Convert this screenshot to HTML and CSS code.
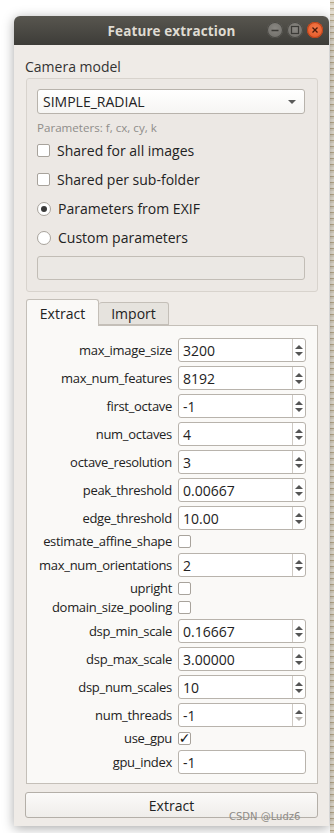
FILE: index.html
```html
<!DOCTYPE html>
<html>
<head>
<meta charset="utf-8">
<link rel="stylesheet" href="styles.css">
</head>
<body>
<div class="window">
  <div class="titlebar">
    <span class="title">Feature extraction</span>
    <div class="wbtns">
      <span class="wbtn min"><svg width="16" height="16" viewBox="0 0 16 16"><line x1="4.5" y1="8.5" x2="11.5" y2="8.5" stroke="#3c3b37" stroke-width="1.3"/></svg></span>
      <span class="wbtn max"><svg width="16" height="16" viewBox="0 0 16 16"><rect x="4.5" y="4.5" width="7" height="7" fill="none" stroke="#3c3b37" stroke-width="1.2"/></svg></span>
      <span class="wbtn close"><svg width="16" height="16" viewBox="0 0 16 16"><path d="M5.5 5.5 L10.5 10.5 M10.5 5.5 L5.5 10.5" stroke="#4a1a0a" stroke-width="1.3"/></svg></span>
    </div>
  </div>
  <div class="content">
    <div class="section-label">Camera model</div>
    <div class="group">
      <div class="combo"><span>SIMPLE_RADIAL</span><span class="combo-arrow"></span></div>
      <div class="hint">Parameters: f, cx, cy, k</div>
      <div class="opt"><span class="cb"></span><span>Shared for all images</span></div>
      <div class="opt"><span class="cb"></span><span>Shared per sub-folder</span></div>
      <div class="opt"><span class="rb checked"></span><span>Parameters from EXIF</span></div>
      <div class="opt"><span class="rb"></span><span>Custom parameters</span></div>
      <div class="lineedit disabled"></div>
    </div>
    <div class="tabs">
      <div class="tab active">Extract</div>
      <div class="tab">Import</div>
    </div>
    <div class="panel">
      <div class="form">
        <label>max_image_size</label><div class="spin"><span class="val">3200</span><span class="arrows"><i class="up"></i><i class="down"></i></span></div>
        <label>max_num_features</label><div class="spin"><span class="val">8192</span><span class="arrows"><i class="up"></i><i class="down"></i></span></div>
        <label>first_octave</label><div class="spin"><span class="val">-1</span><span class="arrows"><i class="up"></i><i class="down"></i></span></div>
        <label>num_octaves</label><div class="spin"><span class="val">4</span><span class="arrows"><i class="up"></i><i class="down"></i></span></div>
        <label>octave_resolution</label><div class="spin"><span class="val">3</span><span class="arrows"><i class="up"></i><i class="down"></i></span></div>
        <label>peak_threshold</label><div class="spin"><span class="val">0.00667</span><span class="arrows"><i class="up"></i><i class="down"></i></span></div>
        <label>edge_threshold</label><div class="spin"><span class="val">10.00</span><span class="arrows"><i class="up"></i><i class="down"></i></span></div>
        <label class="short">estimate_affine_shape</label><div class="cbcell"><span class="cb"></span></div>
        <label>max_num_orientations</label><div class="spin"><span class="val">2</span><span class="arrows"><i class="up"></i><i class="down"></i></span></div>
        <label class="short">upright</label><div class="cbcell"><span class="cb"></span></div>
        <label class="short">domain_size_pooling</label><div class="cbcell"><span class="cb"></span></div>
        <label>dsp_min_scale</label><div class="spin"><span class="val">0.16667</span><span class="arrows"><i class="up"></i><i class="down"></i></span></div>
        <label>dsp_max_scale</label><div class="spin"><span class="val">3.00000</span><span class="arrows"><i class="up"></i><i class="down"></i></span></div>
        <label>dsp_num_scales</label><div class="spin"><span class="val">10</span><span class="arrows"><i class="up"></i><i class="down"></i></span></div>
        <label>num_threads</label><div class="spin"><span class="val">-1</span><span class="arrows"><i class="up"></i><i class="down off"></i></span></div>
        <label class="short">use_gpu</label><div class="cbcell"><span class="cb on">&#10003;</span></div>
        <label>gpu_index</label><div class="lineedit"><span class="val">-1</span></div>
      </div>
    </div>
    <div class="button">Extract</div>
  </div>
</div>
<div class="watermark">CSDN @Ludz6</div>
</body>
</html>
```

FILE: styles.css
```css
html, body {
  margin: 0;
  padding: 0;
}
body {
  width: 334px;
  height: 833px;
  overflow: hidden;
  position: relative;
  font-family: "Open Sans", "DejaVu Sans", sans-serif;
  background:
    repeating-linear-gradient(0deg, #d9d2c2 0 2px, #b9ab8c 2px 3px, #e6e0d4 3px 6px) right top / 4px 100% no-repeat,
    #ffffff;
}
.window {
  margin: 16px 0 0 14px;
  width: 315px;
  border-radius: 6px 6px 0 0;
  box-shadow: 0 2px 12px rgba(0,0,0,0.35);
  overflow: hidden;
}
.titlebar {
  height: 29px;
  background: linear-gradient(#58564f, #3d3c38);
  display: flex;
  align-items: center;
  position: relative;
}
.title {
  flex: 1;
  text-align: center;
  color: #dfdbd2;
  font-weight: bold;
  font-size: 13.5px;
  letter-spacing: 0.1px;
}
.wbtns {
  position: absolute;
  right: 6px;
  top: 6px;
  display: flex;
  gap: 4px;
}
.wbtn {
  width: 16px;
  height: 16px;
  border-radius: 50%;
  display: block;
}
.wbtn svg { display: block; }
.wbtn.min, .wbtn.max {
  background: radial-gradient(circle at 50% 40%, #8a8883, #6a6863);
  box-shadow: inset 0 0 0 1px #4a4944;
}
.wbtn.close {
  background: radial-gradient(circle at 50% 40%, #f57a4a, #e0501f);
  box-shadow: inset 0 0 0 1px #b8431b;
}
.content {
  background: #efebe7;
  padding: 13px 11px 8px 11px;
  color: #3c3c3c;
  font-size: 14px;
}
.section-label {
  line-height: 18px;
  height: 18px;
  color: #333;
}
.group {
  margin-top: 2px;
  margin-left: 1px;
  border: 1px solid #d8d3cd;
  border-radius: 3px;
  padding: 10px 12px 11px 10px;
  background: #ece8e4;
}
.combo {
  height: 25px;
  box-sizing: border-box;
  border: 1px solid #b8b3ac;
  border-radius: 3px;
  background: linear-gradient(#ffffff, #f6f5f3);
  display: flex;
  align-items: center;
  justify-content: space-between;
  padding: 0 8px 0 5px;
  color: #222;
}
.combo-arrow {
  width: 0;
  height: 0;
  border-left: 4px solid transparent;
  border-right: 4px solid transparent;
  border-top: 4px solid #5a5a5a;
}
.hint {
  margin-top: 6px;
  font-size: 11.6px;
  line-height: 16px;
  color: #8f8d8a;
}
.opt {
  height: 29px;
  display: flex;
  align-items: center;
  gap: 7px;
  color: #222;
}
.opt:first-of-type { margin-top: 2px; }
.cb {
  width: 13px;
  height: 13px;
  box-sizing: border-box;
  border: 1px solid #a8a39c;
  border-radius: 2px;
  background: #fff;
  display: inline-flex;
  align-items: center;
  justify-content: center;
  flex: none;
}
.cb.on {
  font-size: 14px;
  line-height: 13px;
  color: #111;
  font-weight: bold;
  font-family: "DejaVu Sans", sans-serif;
}
.rb {
  width: 14px;
  height: 14px;
  box-sizing: border-box;
  border: 1px solid #a8a39c;
  border-radius: 50%;
  background: #fff;
  display: inline-flex;
  align-items: center;
  justify-content: center;
  flex: none;
}
.rb.checked::after {
  content: "";
  width: 6px;
  height: 6px;
  border-radius: 50%;
  background: #3a3a3a;
}
.lineedit {
  height: 24px;
  box-sizing: border-box;
  border: 1px solid #b8b3ac;
  border-radius: 3px;
  background: #fff;
  display: flex;
  align-items: center;
  padding-left: 4px;
  color: #222;
}
.lineedit.disabled {
  margin-top: 4px;
  background: #ebe8e4;
  border-color: #c2bdb6;
}
.tabs {
  display: flex;
  align-items: flex-end;
  margin-top: 7px;
  margin-left: 1px;
  height: 26px;
  position: relative;
  z-index: 1;
}
.tab {
  box-sizing: border-box;
  border: 1px solid #c4bfb8;
  border-bottom: none;
  border-radius: 3px 3px 0 0;
  color: #222;
  display: flex;
  align-items: center;
  justify-content: center;
}
.tab.active {
  width: 73px;
  height: 27px;
  background: #faf9f7;
  margin-bottom: -1px;
}
.tab:not(.active) {
  width: 70px;
  height: 23px;
  background: #e6e3de;
  border-left: none;
  border-bottom: 1px solid #c4bfb8;
}
.panel {
  margin-left: 1px;
  border: 1px solid #c4bfb8;
  background: #faf9f7;
  height: 459px;
  box-sizing: border-box;
  padding: 12px 11px 0 8px;
}
.form {
  display: grid;
  grid-template-columns: 1fr 128px;
  column-gap: 6px;
  row-gap: 4px;
  align-items: center;
}
.form label {
  text-align: right;
  color: #222;
  font-size: 13px;
  letter-spacing: -0.3px;
  line-height: 18px;
  white-space: nowrap;
}
.form label.short {
  line-height: 15px;
  height: 15px;
}
.cbcell {
  height: 15px;
  display: flex;
  align-items: center;
}
.spin {
  height: 24px;
  box-sizing: border-box;
  border: 1px solid #b8b3ac;
  border-radius: 3px;
  background: #fff;
  display: flex;
  align-items: stretch;
  color: #222;
}
.spin .val {
  flex: 1;
  display: flex;
  align-items: center;
  padding-left: 4px;
}
.spin .arrows {
  width: 12px;
  border-left: 1px solid #cfcac4;
  display: flex;
  flex-direction: column;
  align-items: center;
  justify-content: center;
  gap: 3px;
}
.spin i {
  display: block;
  width: 0;
  height: 0;
  border-left: 4px solid transparent;
  border-right: 4px solid transparent;
}
.spin i.up { border-bottom: 4px solid #555; }
.spin i.down { border-top: 4px solid #555; }
.spin i.down.off { border-top-color: #b5b2ad; }
.form .lineedit { padding-left: 4px; }
.button {
  margin-top: 8px;
  height: 26px;
  box-sizing: border-box;
  border: 1px solid #b4afa8;
  border-radius: 3px;
  background: linear-gradient(#fbfaf9, #efedea);
  display: flex;
  align-items: center;
  justify-content: center;
  color: #222;
}
.watermark {
  position: absolute;
  left: 229px;
  top: 811px;
  font-size: 10px;
  line-height: 12px;
  color: #8e8b86;
  font-family: "DejaVu Sans", sans-serif;
}
```
